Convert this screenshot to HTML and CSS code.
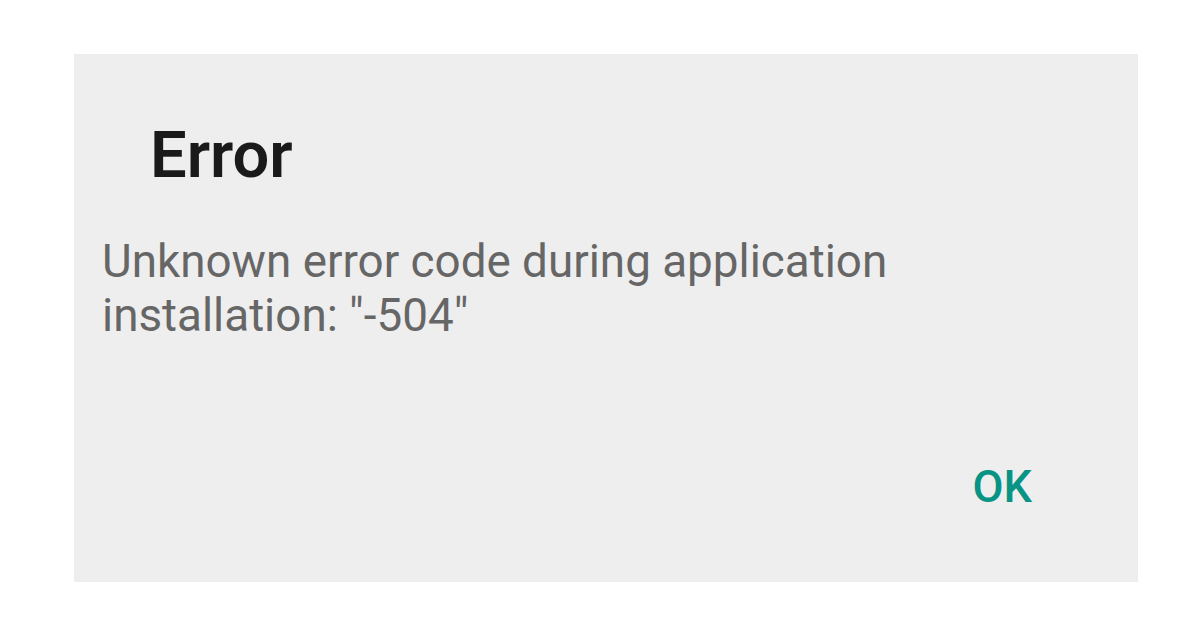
FILE: index.html
```html
<!DOCTYPE html>
<html>
<head>
<meta charset="utf-8">
<link rel="stylesheet" href="styles.css">
</head>
<body>
<div class="dialog">
  <h1 class="title">Error</h1>
  <p class="message">Unknown error code during application installation: "-504"</p>
  <div class="actions"><span class="ok">OK</span></div>
</div>
</body>
</html>
```
FILE: styles.css
```css
html, body {
  margin: 0;
  padding: 0;
  background: #ffffff;
}
body {
  padding: 54px 0 0 74px;
  font-family: Roboto, "Noto Sans", sans-serif;
}
.dialog {
  box-sizing: border-box;
  width: 1064px;
  height: 528px;
  background: #eeeeee;
  display: flex;
  flex-direction: column;
  padding: 68px 106px 73px 28px;
}
.title {
  margin: 0 0 0 48px;
  font-size: 65px;
  line-height: 66px;
  font-weight: 600;
  color: #1a1a1a;
}
.message {
  margin: 47px 0 0 0;
  font-size: 45.8px;
  line-height: 54px;
  color: #666666;
  width: 800px;
}
.actions {
  margin-top: auto;
  display: flex;
  justify-content: flex-end;
}
.ok {
  font-size: 45px;
  line-height: 45px;
  font-weight: 500;
  color: #079485;
}
```
